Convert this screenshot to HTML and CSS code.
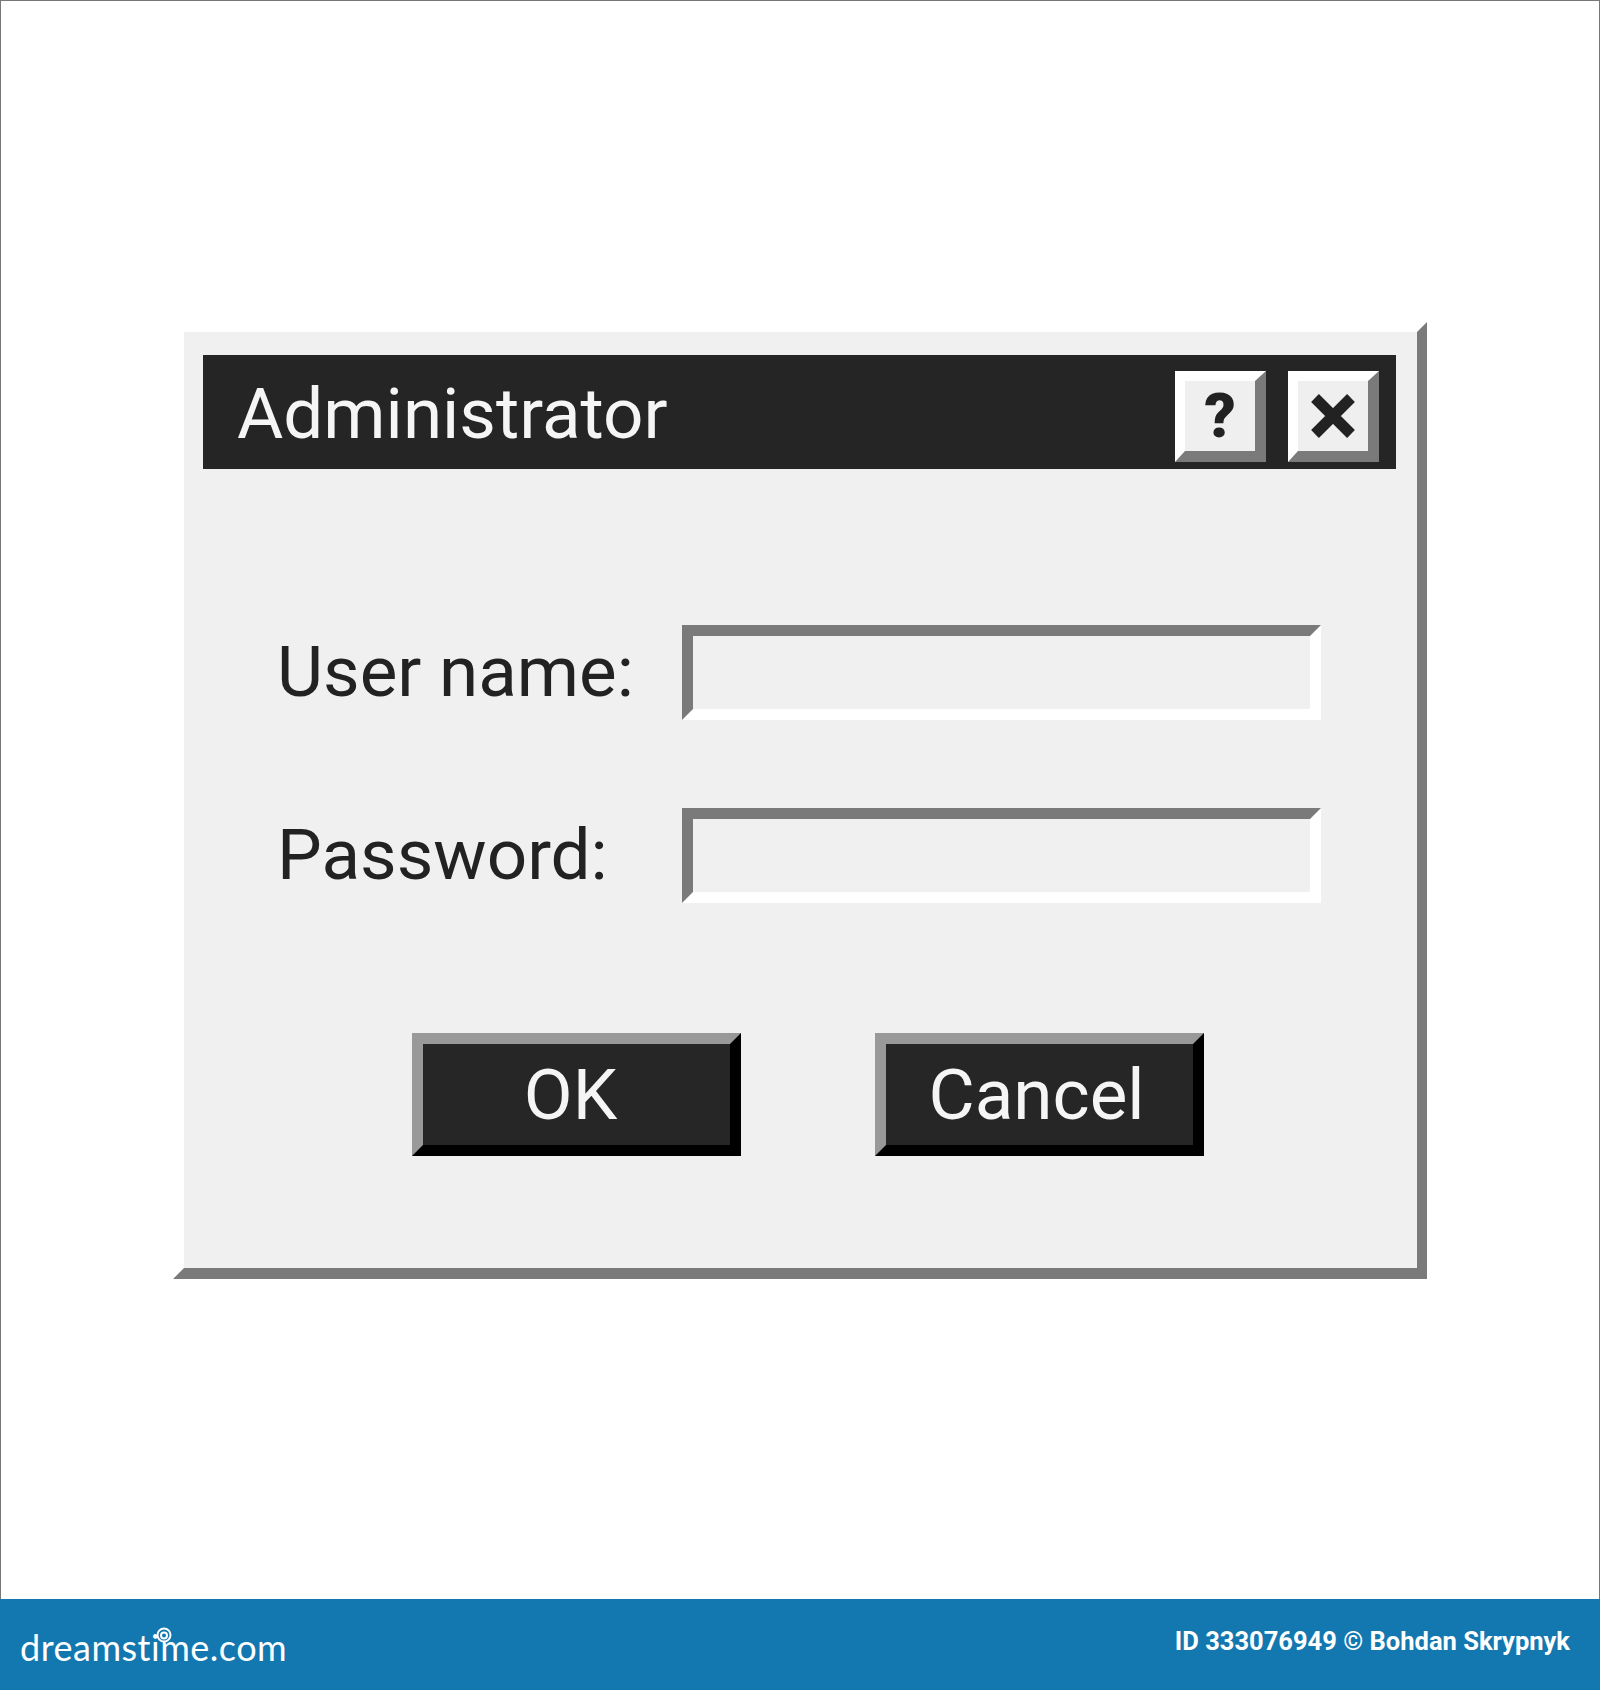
FILE: index.html
```html
<!DOCTYPE html>
<html lang="en">
<head>
  <meta charset="UTF-8">
  <title>Administrator</title>
  <link rel="stylesheet" href="styles.css">
</head>
<body>
  <div class="stage">
    <div class="dialog">
      <div class="titlebar">
        <span class="title">Administrator</span>
        <div class="title-buttons">
          <button class="tbtn help">?</button>
          <button class="tbtn close">
            <svg width="44" height="44" viewBox="0 0 44 44">
              <path d="M4 4 L40 40 M40 4 L4 40" stroke="#222" stroke-width="11" fill="none"/>
            </svg>
          </button>
        </div>
      </div>

      <div class="form">
        <label class="label">User name:</label>
        <div class="field"></div>
        <label class="label">Password:</label>
        <div class="field"></div>
      </div>

      <div class="actions">
        <button class="btn ok">OK</button>
        <button class="btn">Cancel</button>
      </div>
    </div>
  </div>

  <div class="footer">
    <span class="logo">dreamstime.com
      <svg class="spiral" width="16" height="16" viewBox="0 0 16 16">
        <circle cx="8" cy="8" r="6.5" stroke="#fff" stroke-width="2" fill="none"/>
        <circle cx="8" cy="8.5" r="3" stroke="#fff" stroke-width="2" fill="none"/>
      </svg>
    </span>
    <span class="credit">ID 333076949 © Bohdan Skrypnyk</span>
  </div>
</body>
</html>
```

FILE: styles.css
```css
body {
  margin: 0;
  font-family: Roboto, "Liberation Sans", sans-serif;
  background: #fff;
}
.stage {
  height: 1599px;
  box-sizing: border-box;
  border: 1px solid #777;
  border-bottom: none;
  padding-top: 321px;
  padding-left: 172px;
}
.dialog {
  width: 1254px;
  height: 957px;
  box-sizing: border-box;
  background: #f0f0f0;
  border-style: solid;
  border-width: 10px 10px 11px 11px;
  border-color: #fff #7a7a7a #7a7a7a #fff;
  padding: 23px 21px 0 19px;
  display: flex;
  flex-direction: column;
}
.dialog > * {
  flex-shrink: 0;
}
.titlebar {
  height: 114px;
  background: #252525;
  display: flex;
  justify-content: space-between;
  align-items: flex-start;
}
.title {
  color: #f5f5f5;
  font-size: 71px;
  line-height: 114px;
  padding-left: 34px;
  padding-top: 2px;
}
.title-buttons {
  display: flex;
  gap: 22px;
  padding-top: 16px;
  padding-right: 17px;
}
.tbtn {
  width: 91px;
  height: 91px;
  box-sizing: border-box;
  border-style: solid;
  border-width: 10px 11px 11px 10px;
  border-color: #fff #7a7a7a #7a7a7a #fff;
  background: #efefef;
  padding: 0;
  display: flex;
  align-items: center;
  justify-content: center;
  font-family: Roboto, "Liberation Sans", sans-serif;
}
.help {
  font-size: 62px;
  font-weight: 900;
  color: #222;
  line-height: 1;
}
.form {
  display: grid;
  grid-template-columns: 405px 639px;
  row-gap: 88px;
  align-items: center;
  margin-top: 156px;
  margin-left: 74px;
}
.label {
  font-size: 71px;
  color: #222;
  padding-bottom: 3px;
}
.field {
  height: 95px;
  box-sizing: border-box;
  border-style: solid;
  border-width: 11px;
  border-color: #7a7a7a #fff #fff #7a7a7a;
  background: #f0f0f0;
}
.actions {
  display: flex;
  gap: 134px;
  margin-top: 130px;
  margin-left: 209px;
}
.btn {
  width: 329px;
  height: 123px;
  box-sizing: border-box;
  border-style: solid;
  border-width: 11px;
  border-color: #999 #000 #000 #999;
  background: #262626;
  color: #f5f5f5;
  font-family: Roboto, "Liberation Sans", sans-serif;
  font-size: 71px;
  padding: 0 6px 0 0;
}
.btn.ok {
  padding-right: 12px;
}
.footer {
  height: 91px;
  background: #1377b0;
  color: #fff;
  display: flex;
  justify-content: space-between;
  padding: 0 30px 0 20px;
}
.logo {
  position: relative;
  font-family: Lato, sans-serif;
  font-size: 36px;
  padding-top: 26px;
  letter-spacing: 0.5px;
}
.spiral {
  position: absolute;
  left: 136px;
  top: 28px;
}
.credit {
  font-size: 25.5px;
  font-weight: 700;
  padding-top: 27px;
}
```
